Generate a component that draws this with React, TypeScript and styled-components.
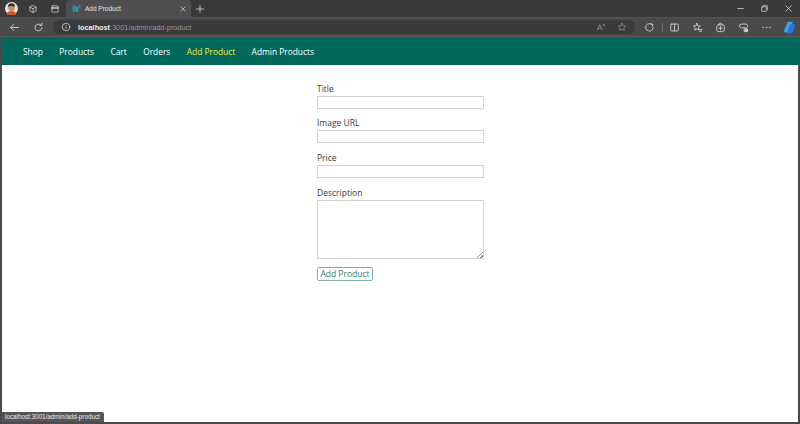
import React from "react";
import styled, { createGlobalStyle } from "styled-components";

const Global = createGlobalStyle`
  html, body { margin: 0; padding: 0; background: #3b3b3d; }
  body { font-family: "Open Sans", "Liberation Sans", sans-serif; }
`;

const Window = styled.div`
  position: relative;
  width: 800px;
  height: 424px;
  display: flex;
  flex-direction: column;
  overflow: hidden;
  background: #4a4a4c;
`;

const TabBar = styled.div`
  height: 17px;
  display: flex;
  align-items: center;
  background: #3a3a3d;
  border-bottom: 1px solid #545456;
`;

const Avatar = styled.svg`
  width: 13px;
  height: 13px;
  margin-left: 5px;
  flex: none;
`;

const TabIcon = styled.span`
  width: 22px;
  height: 17px;
  display: flex;
  align-items: center;
  justify-content: center;
  flex: none;
  color: #c4c4c4;
`;

const FirstTabIcon = styled(TabIcon)`
  margin-left: 4px;
`;

const Tab = styled.div`
  width: 125px;
  height: 17px;
  padding: 0 4px 0 6px;
  box-sizing: border-box;
  display: flex;
  align-items: center;
  background: #4f4f51;
  border-radius: 4px 4px 0 0;
  color: #e4e4e4;
  font-size: 6.5px;
`;

const TabTitle = styled.span`
  flex: 1;
  margin-left: 4px;
  font-family: "Liberation Sans", sans-serif;
`;

const NewTab = styled.span`
  width: 18px;
  display: flex;
  justify-content: center;
  color: #cfcfcf;
`;

const WindowButtons = styled.div`
  margin-left: auto;
  display: flex;
  color: #d8d8d8;
`;

const WindowButton = styled.span`
  width: 24px;
  height: 17px;
  display: flex;
  align-items: center;
  justify-content: center;
`;

const Toolbar = styled.div`
  height: 18px;
  display: flex;
  align-items: center;
  background: #4a4a4c;
  border-bottom: 1px solid #58585a;
  color: #d0d0d0;
`;

const NavButton = styled.span`
  width: 20px;
  height: 18px;
  margin-left: 4px;
  display: flex;
  align-items: center;
  justify-content: center;
  flex: none;
`;

const AddressBar = styled.div`
  width: 582px;
  height: 14px;
  margin-left: 5px;
  padding: 0 8px;
  box-sizing: border-box;
  display: flex;
  align-items: center;
  gap: 4px;
  background: #3a3a3c;
  border-radius: 7px;
  flex: none;
`;

const Url = styled.span`
  margin-left: 3px;
  flex: 1;
  font-family: "Liberation Sans", sans-serif;
  font-size: 7.3px;
  color: #969696;
  b {
    color: #eeeeee;
    font-weight: 700;
  }
`;

const ReadAloud = styled.span`
  display: flex;
  margin-right: 7px;
  color: #8c8c8c;
`;

const FavStar = styled.span`
  display: flex;
  color: #8c8c8c;
`;

const ToolGroup = styled.div`
  margin-left: 9px;
  display: flex;
  align-items: center;
  gap: 12px;
`;

const Divider = styled.span`
  width: 1px;
  height: 9px;
  margin: 0 -5.5px;
  background: #6e6e6e;
`;

const Copilot = styled.svg`
  width: 13px;
  height: 13px;
  margin-left: -1.5px;
`;

const Page = styled.div`
  flex: 1;
  display: flex;
  flex-direction: column;
  margin: 0 2px 2px;
  background: #fff;
  min-height: 0;
`;

const Header = styled.nav`
  height: 28px;
  margin: 0 -1px;
  padding-left: 22px;
  display: flex;
  align-items: center;
  gap: 16.4px;
  background: #00695c;
`;

const NavLink = styled.a<{ $active?: boolean }>`
  font-size: 8.4px;
  color: ${(p) => (p.$active ? "#ffeb3b" : "#ffffff")};
  text-decoration: none;
`;

const Main = styled.main`
  display: flex;
  justify-content: center;
  padding-top: 16.5px;
  padding-left: 1px;
`;

const Form = styled.form`
  width: 167px;
  display: flex;
  flex-direction: column;
`;

const Field = styled.div`
  display: flex;
  flex-direction: column;
  margin-bottom: 7.7px;
`;

const Label = styled.label`
  height: 14px;
  line-height: 13.5px;
  font-size: 8.5px;
  color: #3a3a3a;
`;

const Input = styled.input`
  height: 13px;
  box-sizing: border-box;
  border: 1px solid #d2d2d2;
  background: #fff;
  padding: 0;
`;

const TextArea = styled.textarea`
  height: 59.5px;
  box-sizing: border-box;
  border: 1px solid #d2d2d2;
  background: #fff;
  padding: 0;
  display: block;
  &::-webkit-resizer {
    background: linear-gradient(
        135deg,
        transparent 45%,
        #8a8a8a 45%,
        #8a8a8a 58%,
        transparent 58%,
        transparent 72%,
        #8a8a8a 72%,
        #8a8a8a 86%,
        transparent 86%
      )
      no-repeat right bottom / 6px 6px;
  }
`;

const Submit = styled.button`
  align-self: flex-start;
  width: 56px;
  height: 14px;
  padding: 0;
  box-sizing: border-box;
  background: #fff;
  border: 1px solid #7fb0a9;
  border-radius: 2px;
  font-family: inherit;
  font-size: 8.5px;
  line-height: 12px;
  white-space: nowrap;
  color: #33796f;
`;

const StatusTip = styled.div`
  position: absolute;
  left: 2px;
  bottom: 2px;
  height: 10.5px;
  padding: 0 4px 0 3px;
  display: flex;
  align-items: center;
  background: #555557;
  border-radius: 0 2px 0 0;
  color: #e8e8e8;
  font-family: "Liberation Sans", sans-serif;
  font-size: 6.3px;
`;

const Glyph: React.FC<{ children: React.ReactNode; size?: number }> = ({ children, size = 10 }) => (
  <svg width={size} height={size} viewBox="0 0 16 16" fill="none" stroke="currentColor" strokeWidth="1.3" strokeLinecap="round" strokeLinejoin="round">
    {children}
  </svg>
);

export default function App() {
  return (
    <Window>
      <Global />
      <TabBar>
        <Avatar viewBox="0 0 16 16">
          <circle cx="8" cy="8" r="8" fill="#e9e3da" />
          <path d="M2 16c.5-4 3-5 6-5s5.500 1 6 5z" fill="#c9573c" />
          <circle cx="8" cy="7" r="4" fill="#c48a66" />
          <path d="M3.500 6c0-3 2-4.500 4.500-4.500S12.500 3 12.500 6c-1.500-1.500-7-1.500-9 0z" fill="#3a2a22" />
        </Avatar>
        <FirstTabIcon>
          <Glyph>
            <path d="M8 2.500l5 2.500v6l-5 2.500-5-2.500V5z" />
            <path d="M3 5l5 2.500L13 5M8 7.500v6" />
          </Glyph>
        </FirstTabIcon>
        <TabIcon>
          <Glyph>
            <rect x="3" y="3" width="10" height="10" rx="1" />
            <path d="M3 6.500h10" strokeWidth="2.400" />
          </Glyph>
        </TabIcon>
        <Tab>
          <svg width="9" height="9" viewBox="0 0 16 16">
            <rect x="1" y="2" width="6" height="12" fill="#2f7fb0" />
            <rect x="7" y="5" width="4" height="9" fill="#3a9a8c" />
            <rect x="11" y="2" width="4" height="6" fill="#4a6fc0" />
          </svg>
          <TabTitle>Add Product</TabTitle>
          <Glyph size={8}>
            <path d="M4 4l8 8M12 4l-8 8" />
          </Glyph>
        </Tab>
        <NewTab>
          <Glyph>
            <path d="M8 2.500v11M2.500 8h11" />
          </Glyph>
        </NewTab>
        <WindowButtons>
          <WindowButton>
            <Glyph size={9}>
              <path d="M3 8h10" />
            </Glyph>
          </WindowButton>
          <WindowButton>
            <Glyph size={9}>
              <rect x="3" y="5" width="8" height="8" rx="1" />
              <path d="M5.500 3H13v7.500" />
            </Glyph>
          </WindowButton>
          <WindowButton>
            <Glyph size={9}>
              <path d="M3 3l10 10M13 3L3 13" />
            </Glyph>
          </WindowButton>
        </WindowButtons>
      </TabBar>
      <Toolbar>
        <NavButton>
          <Glyph size={11}>
            <path d="M14 8H2.500M7 3.500L2.500 8 7 12.500" />
          </Glyph>
        </NavButton>
        <NavButton>
          <Glyph size={11}>
            <path d="M13 8a5 5 0 1 1-1.600-3.700M13 2v3h-3" />
          </Glyph>
        </NavButton>
        <AddressBar>
          <Glyph size={10}>
            <circle cx="8" cy="8" r="6" />
            <path d="M8 7.500v3.500M8 5v.2" />
          </Glyph>
          <Url>
            <b>localhost</b>:3001/admin/add-product
          </Url>
          <ReadAloud>
            <Glyph size={10}>
              <path d="M2 13L6 4l4 9M3.500 10h5M11 6l1.500-3L14 6" />
            </Glyph>
          </ReadAloud>
          <FavStar>
            <Glyph size={10}>
              <path d="M8 2l1.800 3.900 4.200.5-3.100 2.900.8 4.200L8 11.400l-3.700 2.100.8-4.200L2 6.400l4.200-.5z" />
            </Glyph>
          </FavStar>
        </AddressBar>
        <ToolGroup>
          <Glyph size={11}>
            <path d="M12 4a5.500 5.500 0 1 0 1.500 4M10 2.500l3 1-1 3" />
          </Glyph>
          <Divider />
          <Glyph size={11}>
            <rect x="2.500" y="3" width="11" height="10" rx="1.500" />
            <path d="M8 3v10" />
          </Glyph>
          <Glyph size={11}>
            <path d="M7 2l1.500 3.500 3.500.4-2.600 2.400.7 3.500L7 10l-3.100 1.800.7-3.500L2 5.900l3.500-.4zM11 11h3M11 13.500h3" />
          </Glyph>
          <Glyph size={11}>
            <rect x="2.500" y="4" width="11" height="10" rx="3" />
            <path d="M8 6.500v5M5.500 9h5M5 4c0-3 6-3 6 0" />
          </Glyph>
          <Glyph size={11}>
            <path d="M2 5.500a3 3 0 0 1 3-2.500h6a3 3 0 0 1 3 2.500c0 2-1.500 3-3 3H5c-1.500 0-3-1-3-3z" />
            <rect x="9.500" y="10" width="4.500" height="4" fill="currentColor" />
          </Glyph>
          <Glyph size={11}>
            <path d="M3 8h.2M8 8h.2M13 8h.2" strokeWidth="2" />
          </Glyph>
          <Copilot viewBox="0 0 16 16">
            <path d="M6 1h6l-4 13H3c-1.500 0-2-1-1.600-2.500z" fill="#2fa8e8" />
            <path d="M9 4h6l-2.500 9c-.4 1.500-1.200 2-2.500 2H5z" fill="#2f6fe0" />
          </Copilot>
        </ToolGroup>
      </Toolbar>
      <Page>
        <Header>
          <NavLink href="#">Shop</NavLink>
          <NavLink href="#">Products</NavLink>
          <NavLink href="#">Cart</NavLink>
          <NavLink href="#">Orders</NavLink>
          <NavLink href="#" $active>
            Add Product
          </NavLink>
          <NavLink href="#">Admin Products</NavLink>
        </Header>
        <Main>
          <Form onSubmit={(e) => e.preventDefault()}>
            <Field>
              <Label>Title</Label>
              <Input type="text" />
            </Field>
            <Field>
              <Label>Image URL</Label>
              <Input type="text" />
            </Field>
            <Field>
              <Label>Price</Label>
              <Input type="text" />
            </Field>
            <Field>
              <Label>Description</Label>
              <TextArea />
            </Field>
            <Submit type="submit">Add Product</Submit>
          </Form>
        </Main>
      </Page>
      <StatusTip>localhost:3001/admin/add-product</StatusTip>
    </Window>
  );
}
